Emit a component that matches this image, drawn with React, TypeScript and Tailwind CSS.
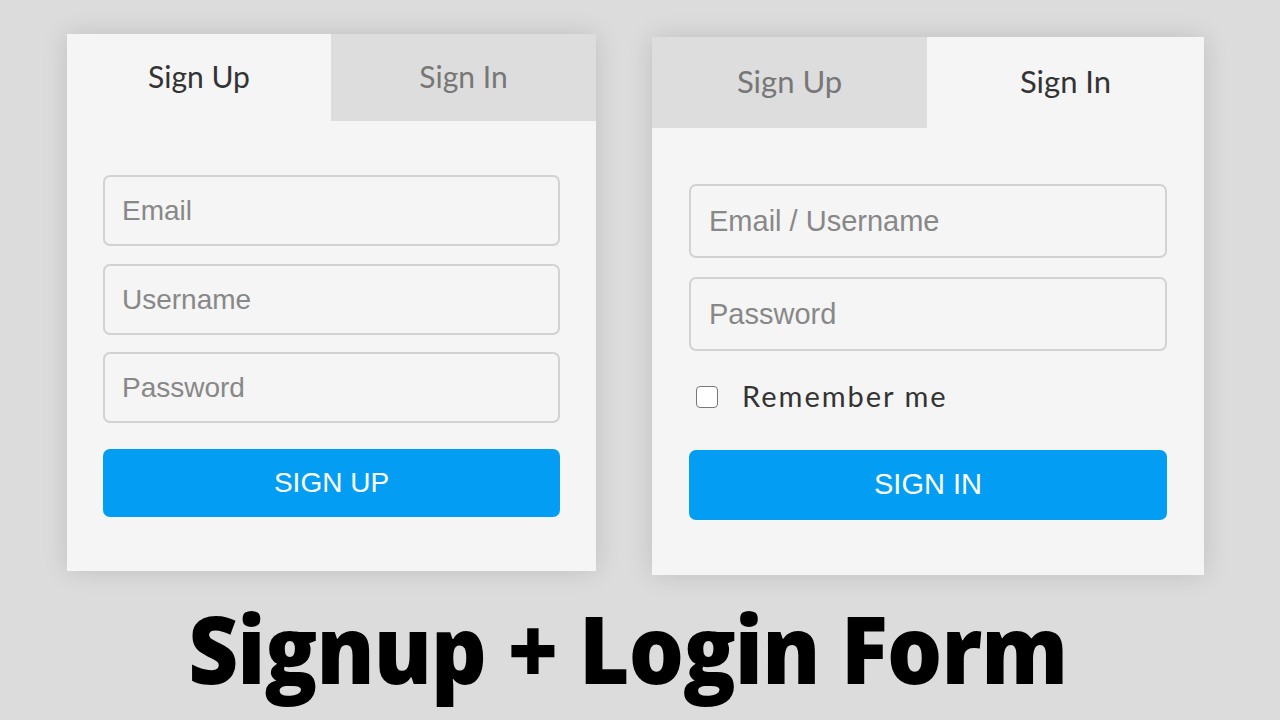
export default function App() {
  return (
    <div className="w-[1280px] h-[720px] overflow-hidden bg-[#dcdcdc] flex flex-col items-center">
      <div className="flex items-start w-full">
        {/* Sign up card */}
        <div className="ml-[67px] mt-[34px] w-[529px] h-[537px] bg-[#f5f5f5] shadow-[0_0_24px_rgba(0,0,0,0.13)] flex flex-col">
          <div className="flex h-[87px] font-['Lato',sans-serif] text-[30px]">
            <div className="w-[264px] flex items-center justify-center pb-[2px] text-[#333]">Sign Up</div>
            <div className="flex-1 flex items-center justify-center pb-[2px] bg-[#dddddd] text-[#777]">Sign In</div>
          </div>
          <div className="px-[36px] pt-[54px] flex flex-col font-['Liberation_Sans',Arial,sans-serif]">
            <input
              placeholder="Email"
              className="h-[71px] rounded-[7px] border-2 border-[#d2d2d2] bg-[#f5f5f5] px-[17px] text-[28px] text-[#333] placeholder:text-[#888] outline-none"
            />
            <input
              placeholder="Username"
              className="mt-[18px] h-[71px] rounded-[7px] border-2 border-[#d2d2d2] bg-[#f5f5f5] px-[17px] text-[28px] text-[#333] placeholder:text-[#888] outline-none"
            />
            <input
              placeholder="Password"
              type="password"
              className="mt-[17px] h-[71px] rounded-[7px] border-2 border-[#d2d2d2] bg-[#f5f5f5] px-[17px] text-[28px] text-[#333] placeholder:text-[#888] outline-none"
            />
            <button className="mt-[26px] h-[68px] rounded-[7px] bg-[#039ef3] text-white text-[28px]">SIGN UP</button>
          </div>
        </div>

        {/* Sign in card */}
        <div className="ml-[56px] mt-[37px] w-[552px] h-[538px] bg-[#f5f5f5] shadow-[0_0_24px_rgba(0,0,0,0.13)] flex flex-col">
          <div className="flex h-[91px] font-['Lato',sans-serif] text-[31px]">
            <div className="w-[275px] flex items-center justify-center pb-[2px] bg-[#dddddd] text-[#777]">Sign Up</div>
            <div className="flex-1 flex items-center justify-center pb-[2px] text-[#333]">Sign In</div>
          </div>
          <div className="px-[37px] pt-[56px] flex flex-col font-['Liberation_Sans',Arial,sans-serif]">
            <input
              placeholder="Email / Username"
              className="h-[74px] rounded-[7px] border-2 border-[#d2d2d2] bg-[#f5f5f5] px-[18px] text-[29px] text-[#333] placeholder:text-[#888] outline-none"
            />
            <input
              placeholder="Password"
              type="password"
              className="mt-[19px] h-[74px] rounded-[7px] border-2 border-[#d2d2d2] bg-[#f5f5f5] px-[18px] text-[29px] text-[#333] placeholder:text-[#888] outline-none"
            />
            <label className="mt-[34px] flex items-center h-[24px] pl-[7px]">
              <span className="w-[22px] h-[22px] rounded-[4px] border-[1.5px] border-[#777] bg-white" />
              <span className="ml-[24px] pb-[2px] text-[29px] tracking-[2px] text-[#333] font-['Lato',sans-serif]">Remember me</span>
            </label>
            <button className="mt-[41px] h-[70px] rounded-[7px] bg-[#039ef3] text-white text-[29px]">SIGN IN</button>
          </div>
        </div>
      </div>

      <h1 className="mt-[26px] mr-[24px] font-['Open_Sans',sans-serif] font-extrabold text-[94px] leading-none tracking-[-1px] text-black scale-x-[0.924]">
        Signup + Login Form
      </h1>
    </div>
  )
}
